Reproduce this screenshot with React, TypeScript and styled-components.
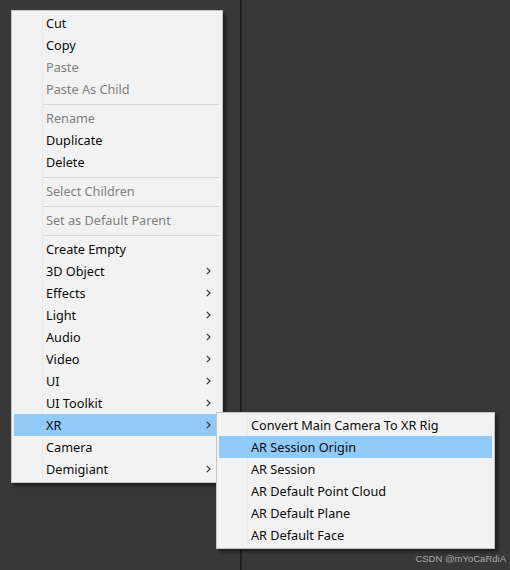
import React from 'react';
import styled, { createGlobalStyle } from 'styled-components';

const GlobalStyle = createGlobalStyle`
  html, body {
    margin: 0;
    padding: 0;
    background: #383838;
  }
  body {
    font-family: "Noto Sans", "Open Sans", sans-serif;
  }
`;

const Page = styled.div`
  position: relative;
  width: 510px;
  height: 570px;
  display: flex;
  background: #383838;
  overflow: hidden;
`;

const LeftPane = styled.div`
  width: 240px;
  height: 100%;
  background: #383838;
`;

const Divider = styled.div`
  width: 2px;
  height: 100%;
  background: #1f1f1f;
`;

const RightPane = styled.div`
  flex: 1;
  height: 100%;
  background: #383838;
`;

const Menu = styled.div<{ $left: number; $top: number; $width: number }>`
  position: absolute;
  left: ${(p) => p.$left}px;
  top: ${(p) => p.$top}px;
  width: ${(p) => p.$width}px;
  box-sizing: border-box;
  padding: 1px 2px 2px 2px;
  background: #f2f2f2;
  border: 1px solid #c4c4c4;
  box-shadow: 3px 3px 3px rgba(0, 0, 0, 0.45);
  display: flex;
  flex-direction: column;
  &::before {
    content: '';
    position: absolute;
    top: 1px;
    bottom: 1px;
    left: 30px;
    width: 1px;
    background: #e9e9e9;
  }
`;

const Item = styled.div<{ $disabled?: boolean; $active?: boolean }>`
  position: relative;
  height: 22px;
  display: flex;
  align-items: center;
  padding-left: 32px;
  padding-right: 8px;
  font-size: 12.7px;
  color: ${(p) => (p.$disabled ? '#808080' : '#0a0a0a')};
  background: ${(p) => (p.$active ? '#91c9f7' : 'transparent')};
  white-space: nowrap;
`;

const Label = styled.span`
  flex: 1;
`;

const Arrow = styled.svg`
  width: 5px;
  height: 8px;
  margin-right: 1px;
`;

const Separator = styled.div`
  height: 7px;
  box-sizing: border-box;
  padding: 4px 1px 0 29px;
  &::after {
    content: '';
    display: block;
    height: 1px;
    background: #d7d7d7;
  }
`;

const Watermark = styled.div`
  position: absolute;
  right: 4px;
  bottom: 6px;
  font-family: "Liberation Sans", Arial, sans-serif;
  font-size: 9.5px;
  color: #a8a8a8;
`;

type Entry =
  | { sep: true }
  | { label: string; disabled?: boolean; sub?: boolean; active?: boolean };

const mainItems: Entry[] = [
  { label: 'Cut' },
  { label: 'Copy' },
  { label: 'Paste', disabled: true },
  { label: 'Paste As Child', disabled: true },
  { sep: true },
  { label: 'Rename', disabled: true },
  { label: 'Duplicate' },
  { label: 'Delete' },
  { sep: true },
  { label: 'Select Children', disabled: true },
  { sep: true },
  { label: 'Set as Default Parent', disabled: true },
  { sep: true },
  { label: 'Create Empty' },
  { label: '3D Object', sub: true },
  { label: 'Effects', sub: true },
  { label: 'Light', sub: true },
  { label: 'Audio', sub: true },
  { label: 'Video', sub: true },
  { label: 'UI', sub: true },
  { label: 'UI Toolkit', sub: true },
  { label: 'XR', sub: true, active: true },
  { label: 'Camera' },
  { label: 'Demigiant', sub: true },
];

const xrItems: Entry[] = [
  { label: 'Convert Main Camera To XR Rig' },
  { label: 'AR Session Origin', active: true },
  { label: 'AR Session' },
  { label: 'AR Default Point Cloud' },
  { label: 'AR Default Plane' },
  { label: 'AR Default Face' },
];

const ChevronRight = () => (
  <Arrow viewBox="0 0 5 8">
    <path d="M0.8 0.8 L4 4 L0.8 7.2" fill="none" stroke="#333" strokeWidth="1.2" />
  </Arrow>
);

const MenuList: React.FC<{ items: Entry[] }> = ({ items }) => (
  <>
    {items.map((it, i) =>
      'sep' in it ? (
        <Separator key={i} />
      ) : (
        <Item key={i} $disabled={it.disabled} $active={it.active}>
          <Label>{it.label}</Label>
          {it.sub && <ChevronRight />}
        </Item>
      )
    )}
  </>
);

const App: React.FC = () => (
  <>
    <GlobalStyle />
    <Page>
      <LeftPane />
      <Divider />
      <RightPane />
      <Menu $left={11} $top={10} $width={212}>
        <MenuList items={mainItems} />
      </Menu>
      <Menu $left={216} $top={412} $width={279}>
        <MenuList items={xrItems} />
      </Menu>
      <Watermark>CSDN @mYoCaRdiA</Watermark>
    </Page>
  </>
);

export default App;
